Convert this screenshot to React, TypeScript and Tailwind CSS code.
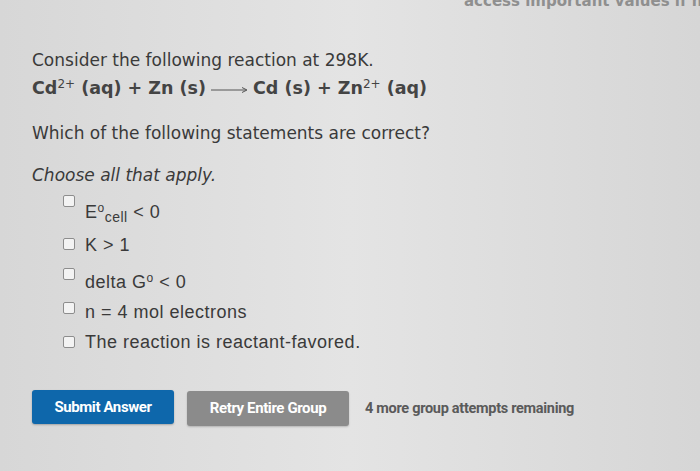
import React from "react";

function Box({ top }: { top: string }) {
	return (
		<span
			className={`inline-block h-[12px] w-[12px] shrink-0 rounded-[2px] border border-[#8d8d8d] bg-[#f3f3f3] ${top}`}
		/>
	);
}

function Arrow() {
	return (
		<svg className="mx-[5px] mt-[3px]" width="37" height="8" viewBox="0 0 37 8">
			<line x1="0" y1="4" x2="35" y2="4" stroke="#555" strokeWidth="1" />
			<path d="M31 1.5 L36 4 L31 6.5" fill="none" stroke="#555" strokeWidth="1" />
		</svg>
	);
}

export default function App() {
	return (
		<div
			className="h-[471px] w-[700px] overflow-hidden bg-gradient-to-r from-[#d7d7d7] via-[#e4e4e4] to-[#d6d6d6] text-[#3a3a3a]"
			style={{ fontFamily: '"DejaVu Sans", Verdana, sans-serif' }}
		>
			<div className="-mt-[8px] h-[18px] whitespace-nowrap pl-[464px] text-[15px] font-bold leading-[18px] text-[#8f8f8f]">
				access important values if needed for this question.
			</div>

			<div className="pl-[32px] pt-[40px]">
				<p className="text-[17px] leading-[20px]">Consider the following reaction at 298K.</p>

				<div className="mt-[8px] flex h-[20px] items-center whitespace-nowrap text-[17.5px] font-bold leading-[20px] text-[#444]">
					<span>
						Cd<sup className="text-[12px] font-normal">2+</sup> (aq) + Zn (s)
					</span>
					<Arrow />
					<span>
						Cd (s) + Zn<sup className="text-[12px] font-normal">2+</sup> (aq)
					</span>
				</div>

				<p className="mt-[25px] text-[17px] leading-[20px]">Which of the following statements are correct?</p>
				<p className="mt-[22px] text-[17px] italic leading-[20px]">Choose all that apply.</p>

				<div
					className="ml-[31px] mt-[7px] flex flex-col text-[18px] leading-[20px] tracking-[0.5px]"
					style={{ fontFamily: '"Liberation Sans", Arial, sans-serif' }}
				>
					<div className="flex h-[40px] items-start gap-[10px]">
						<Box top="mt-[3px]" />
						<span className="mt-[10px]">
							E<sup className="text-[12px]">o</sup>
							<sub className="text-[14px]">cell</sub> &lt; 0
						</span>
					</div>
					<div className="flex h-[30px] items-start gap-[10px]">
						<Box top="mt-[6px]" />
						<span className="mt-[3px]">K &gt; 1</span>
					</div>
					<div className="flex h-[35px] items-start gap-[10px]">
						<Box top="mt-[6px]" />
						<span className="mt-[10px]">
							delta G<sup className="text-[12px]">o</sup> &lt; 0
						</span>
					</div>
					<div className="flex h-[30px] items-start gap-[10px]">
						<Box top="mt-[5px]" />
						<span className="mt-[5px]">n = 4 mol electrons</span>
					</div>
					<div className="flex h-[30px] items-start gap-[10px]">
						<Box top="mt-[9px]" />
						<span className="mt-[5px]">The reaction is reactant-favored.</span>
					</div>
				</div>

				<div
					className="mt-[33px] flex items-start"
					style={{ fontFamily: 'Roboto, "Liberation Sans", sans-serif' }}
				>
					<button className="h-[34px] w-[142px] rounded-[3px] bg-[#0e67ab] text-[15px] font-bold tracking-[-0.4px] text-white shadow-[0_1px_2px_rgba(0,0,0,0.25)]">
						Submit Answer
					</button>
					<button className="ml-[13px] mt-[1px] h-[35px] w-[162px] rounded-[3px] bg-[#8b8b8b] text-[15px] font-bold tracking-[-0.4px] text-white shadow-[0_1px_2px_rgba(0,0,0,0.2)]">
						Retry Entire Group
					</button>
					<span className="ml-[16px] mt-[8px] text-[14.5px] font-bold tracking-[-0.3px] text-[#5a5a5a]">
						4 more group attempts remaining
					</span>
				</div>
			</div>
		</div>
	);
}
